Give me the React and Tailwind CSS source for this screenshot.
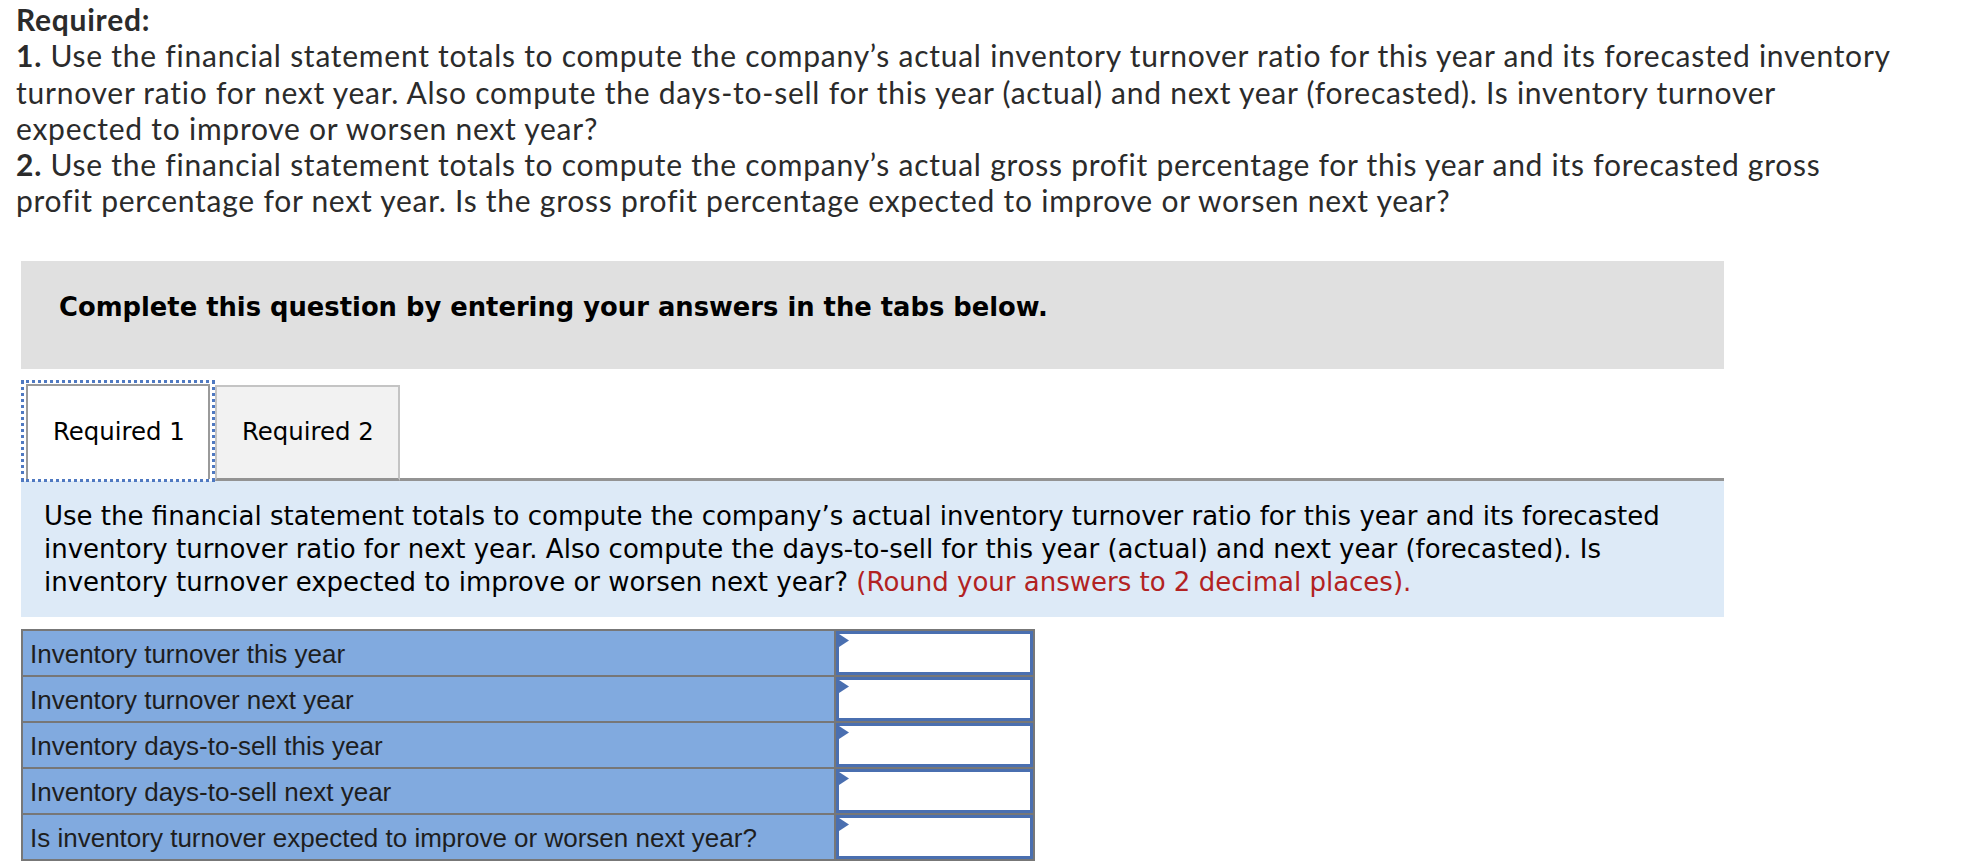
import React from "react";

const rows = [
  "Inventory turnover this year",
  "Inventory turnover next year",
  "Inventory days-to-sell this year",
  "Inventory days-to-sell next year",
  "Is inventory turnover expected to improve or worsen next year?",
];

function AnswerCell() {
  return (
    <div className="relative h-[44px] border-[3px] border-[#4a6fb0] bg-white">
      <svg className="absolute left-0 top-0" width="11" height="14" viewBox="0 0 11 14">
        <polygon points="0,0 10,6.5 0,13" fill="#4a6fb0" />
      </svg>
    </div>
  );
}

export default function App() {
  return (
    <div className="w-[1970px] h-[868px] overflow-hidden bg-white">
      {/* required text */}
      <div className="pl-[16px] pt-[1px] font-['Lato',sans-serif] text-[30px] leading-[36.3px] tracking-[0.75px] text-[#2b2b2b] whitespace-nowrap">
        <p className="font-bold">Required:</p>
        <p>
          <span className="font-bold">1.</span> Use the financial statement totals to compute the company’s actual inventory turnover ratio for this year and its forecasted inventory
          <br />
          turnover ratio for next year. Also compute the days-to-sell for this year (actual) and next year (forecasted). Is inventory turnover
          <br />
          expected to improve or worsen next year?
        </p>
        <p>
          <span className="font-bold">2.</span> Use the financial statement totals to compute the company’s actual gross profit percentage for this year and its forecasted gross
          <br />
          profit percentage for next year. Is the gross profit percentage expected to improve or worsen next year?
        </p>
      </div>

      <div className="ml-[21px] w-[1703px] font-['DejaVu_Sans',sans-serif]">
        <div className="mt-[42px] h-[108px] bg-[#e0e0e0] pl-[38px] pt-[27px]">
          <p className="text-[25.8px] font-bold text-black">
            Complete this question by entering your answers in the tabs below.
          </p>
        </div>

        {/* tabs */}
        <div className="mt-[11px] flex items-end">
          <div className="border-[3px] border-dotted border-[#4f79c1] px-[2px] pt-[1px] -mb-[1px]">
            <div className="flex h-[95px] w-[184px] items-center border-2 border-b-0 border-[#9a9a9a] bg-white pl-[25px] text-[24.4px] text-black">
              Required 1
            </div>
          </div>
          <div className="flex h-[96px] w-[185px] items-center border-x-2 border-t-2 border-b-[3px] border-x-[#c4c4c4] border-t-[#c4c4c4] border-b-[#939393] bg-[#f2f2f2] pl-[25px] text-[24.4px] text-black">
            Required 2
          </div>
          <div className="flex-1 border-b-[3px] border-[#939393]" />
        </div>

        {/* instructions */}
        <div className="h-[136px] bg-[#ddeaf7] pl-[23px] pt-[19px] text-[26px] leading-[33px] text-black whitespace-nowrap">
          Use the financial statement totals to compute the company’s actual inventory turnover ratio for this year and its forecasted
          <br />
          inventory turnover ratio for next year. Also compute the days-to-sell for this year (actual) and next year (forecasted). Is
          <br />
          inventory turnover expected to improve or worsen next year?{" "}
          <span className="text-[#b22222]">(Round your answers to 2 decimal places).</span>
        </div>
      </div>

      {/* answer table */}
      <table className="ml-[21px] mt-[12px] border-collapse font-['Liberation_Sans',Arial,sans-serif] text-[26px] text-[#1e1e1e]">
        <tbody>
          {rows.map((r) => (
            <tr key={r}>
              <td className="w-[813px] h-[44px] border-2 border-[#777] bg-[#81aadf] pl-[7px] pt-[3px] leading-none">
                {r}
              </td>
              <td className="w-[199px] border-2 border-[#777] p-0">
                <AnswerCell />
              </td>
            </tr>
          ))}
        </tbody>
      </table>
    </div>
  );
}
